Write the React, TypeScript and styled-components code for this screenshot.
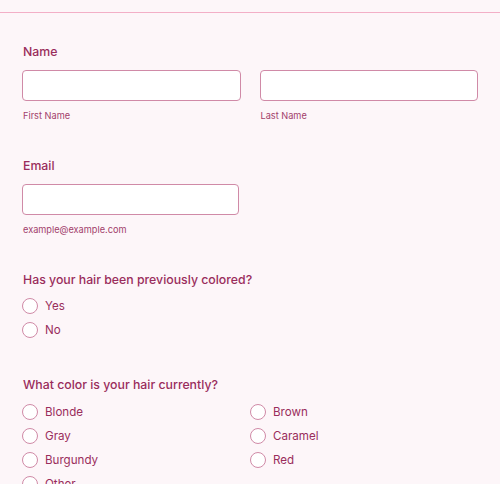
import React from 'react'
import styled, { createGlobalStyle } from 'styled-components'

const GlobalStyle = createGlobalStyle`
  html, body {
    margin: 0;
    padding: 0;
    background: #fdf6f9;
  }
  body {
    font-family: Inter, "Noto Sans", sans-serif;
    color: #9a2d5c;
  }
`

const Form = styled.form`
  margin-top: 12px;
  border-top: 1px solid #f3afc7;
  padding: 29px 22px 0;
  display: flex;
  flex-direction: column;
  gap: 33px;
`

const Field = styled.div`
  display: flex;
  flex-direction: column;
`

const Label = styled.div`
  font-size: 12.3px;
  line-height: 20px;
  font-weight: 500;
  margin-bottom: 8px;
  padding-left: 1px;
`

const Question = styled(Label)<{ $space?: number }>`
  margin-bottom: ${(p) => p.$space ?? 4}px;
`

const Row = styled.div`
  display: grid;
  grid-template-columns: 1fr 1fr;
  column-gap: 19px;
`

const Col = styled.div<{ $half?: boolean }>`
  display: flex;
  flex-direction: column;
  width: ${(p) => (p.$half ? '217px' : 'auto')};
`

const Input = styled.input`
  box-sizing: border-box;
  height: 31px;
  width: 100%;
  border: 1px solid #d08aa7;
  border-radius: 4px;
  background: #fff;
  outline: none;
`

const Sub = styled.div`
  font-size: 9.2px;
  line-height: 14px;
  margin-top: 8px;
  padding-left: 1px;
  color: #a2406b;
`

const Options = styled.div<{ $cols: number }>`
  display: grid;
  grid-template-columns: repeat(${(p) => p.$cols}, 1fr);
`

const Option = styled.label`
  display: flex;
  align-items: center;
  height: 24px;
  font-size: 11.6px;
  cursor: pointer;
`

const Circle = styled.span`
  box-sizing: border-box;
  width: 16px;
  height: 16px;
  border: 1.5px solid #d08aa7;
  border-radius: 50%;
  background: #fff;
  margin-right: 7px;
`

const Radio: React.FC<{ label: string }> = ({ label }) => (
  <Option>
    <Circle />
    {label}
  </Option>
)

const colors = ['Blonde', 'Brown', 'Gray', 'Caramel', 'Burgundy', 'Red', 'Other']

const App: React.FC = () => (
  <>
    <GlobalStyle />
    <Form>
      <Field>
        <Label>Name</Label>
        <Row>
          <Col>
            <Input />
            <Sub>First Name</Sub>
          </Col>
          <Col>
            <Input />
            <Sub>Last Name</Sub>
          </Col>
        </Row>
      </Field>
      <Field>
        <Label>Email</Label>
        <Col $half>
          <Input />
          <Sub>example@example.com</Sub>
        </Col>
      </Field>
      <Field>
        <Question>Has your hair been previously colored?</Question>
        <Options $cols={1}>
          <Radio label="Yes" />
          <Radio label="No" />
        </Options>
      </Field>
      <Field>
        <Question $space={5}>What color is your hair currently?</Question>
        <Options $cols={2}>
          {colors.map((c) => (
            <Radio key={c} label={c} />
          ))}
        </Options>
      </Field>
    </Form>
  </>
)

export default App
